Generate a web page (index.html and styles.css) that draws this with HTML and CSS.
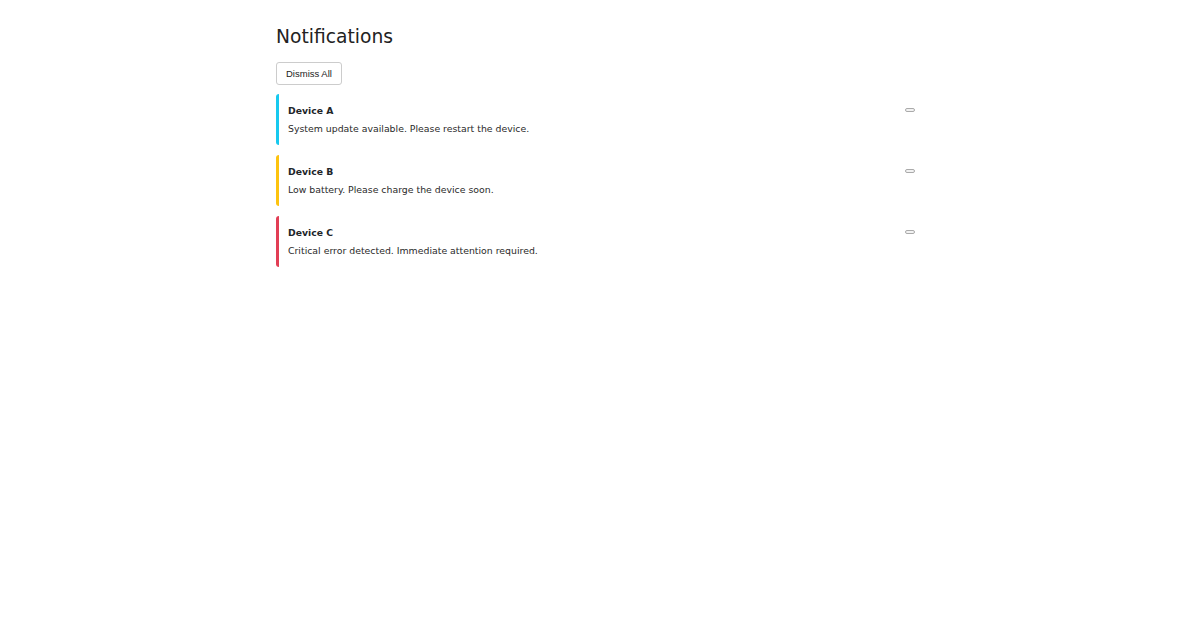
FILE: index.html
```html
<!DOCTYPE html>
<html>
<head>
<meta charset="utf-8">
<link rel="stylesheet" href="styles.css">
</head>
<body>
<div class="container">
  <h1 class="title">Notifications</h1>
  <button class="dismiss-all">Dismiss All</button>
  <div class="list">
    <div class="card card-info">
      <div class="card-body">
        <div class="card-title">Device A</div>
        <div class="card-msg">System update available. Please restart the device.</div>
      </div>
      <button class="close" aria-label="Dismiss"></button>
    </div>
    <div class="card card-warning">
      <div class="card-body">
        <div class="card-title">Device B</div>
        <div class="card-msg">Low battery. Please charge the device soon.</div>
      </div>
      <button class="close" aria-label="Dismiss"></button>
    </div>
    <div class="card card-danger">
      <div class="card-body">
        <div class="card-title">Device C</div>
        <div class="card-msg">Critical error detected. Immediate attention required.</div>
      </div>
      <button class="close" aria-label="Dismiss"></button>
    </div>
  </div>
</div>
</body>
</html>
```
FILE: styles.css
```css
html, body {
  margin: 0;
  padding: 0;
  background: #fff;
}
body {
  font-family: "DejaVu Sans", sans-serif;
  color: #212529;
}
.container {
  width: 648px;
  margin: 0 auto;
  padding-top: 25px;
}
.title {
  font-size: 18.7px;
  font-weight: 400;
  line-height: 24px;
  margin: 0 0 13px 0;
  color: #222;
}
.dismiss-all {
  font-family: "Liberation Sans", Arial, sans-serif;
  font-size: 9.5px;
  color: #222;
  background: #fff;
  border: 1px solid #ccc;
  border-radius: 3px;
  height: 23px;
  padding: 0 9px;
  display: block;
  margin-bottom: 9px;
}
.list {
  display: flex;
  flex-direction: column;
  gap: 10px;
}
.card {
  display: flex;
  align-items: flex-start;
  border-left: 3px solid #ccc;
  border-radius: 3px;
  padding: 11px 9px 10px 9px;
  background: #fff;
}
.card-info { border-left-color: #17c9ef; }
.card-warning { border-left-color: #fdc30f; }
.card-danger { border-left-color: #e23e55; }
.card-body {
  flex: 1;
}
.card-title {
  font-size: 9.25px;
  font-weight: bold;
  line-height: 12px;
  margin-bottom: 6px;
}
.card-msg {
  font-size: 9.35px;
  line-height: 12px;
  color: #2a2a2a;
}
.close {
  width: 10px;
  height: 4px;
  padding: 0;
  margin-top: 3px;
  border: 1px solid #aaa;
  border-radius: 2px;
  background: #f2f2f2;
}
```
